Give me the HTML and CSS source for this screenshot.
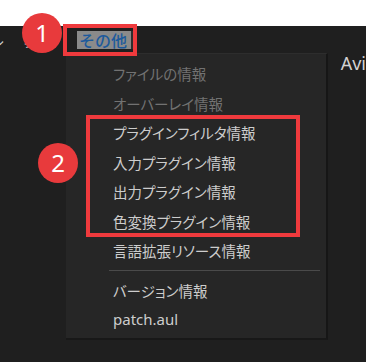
FILE: index.html
```html
<!DOCTYPE html>
<html lang="ja">
<head>
<meta charset="utf-8">
<link rel="stylesheet" href="styles.css">
</head>
<body>
<div class="top"></div>
<div class="app">
  <div class="menubar">
    <span class="mb-item cut">ル</span>
    <span class="mb-item hidden">表示</span>
    <span class="mb-item active"><span class="hl">その他</span><span class="caret"></span></span>
  </div>
  <div class="workspace">
    <div class="left"></div>
    <div class="right"><span class="avi">Avi</span></div>
  </div>

  <div class="dropdown">
    <div class="item disabled">ファイルの情報</div>
    <div class="item disabled">オーバーレイ情報</div>
    <div class="item">プラグインフィルタ情報</div>
    <div class="item">入力プラグイン情報</div>
    <div class="item">出力プラグイン情報</div>
    <div class="item">色変換プラグイン情報</div>
    <div class="item">言語拡張リソース情報</div>
    <div class="sep"></div>
    <div class="item">バージョン情報</div>
    <div class="item latin">patch.aul</div>
  </div>

  <div class="mark box1"></div>
  <div class="mark box2"></div>
  <div class="badge b1">1</div>
  <div class="badge b2">2</div>
</div>
</body>
</html>
```

FILE: styles.css
```css
html, body {
  margin: 0;
  padding: 0;
}
body {
  width: 366px;
  height: 362px;
  overflow: hidden;
  background: #1f1f1f;
  font-family: "Noto Sans CJK JP", sans-serif;
}
.top {
  height: 26px;
  background: #ffffff;
}
.app {
  position: relative;
  height: 336px;
  background: #1f1f1f;
  display: flex;
  flex-direction: column;
}
.menubar {
  height: 27px;
  display: flex;
  align-items: center;
  margin-left: -11px;
  color: #cfcfcf;
  font-size: 15px;
}
.mb-item {
  line-height: 18px;
}
.mb-item.hidden {
  margin-left: 20px;
  font-size: 14px;
}
.mb-item.active {
  display: flex;
  margin-left: 25px;
}
.hl {
  background: #8a8a8a;
  color: #1d5a9c;
  font-size: 16px;
  line-height: 18px;
  padding: 0 4px 0 2px;
  font-weight: 500;
}
.caret {
  width: 4px;
  background: #2e2e2e;
}
.workspace {
  flex: 1;
  display: flex;
}
.left {
  width: 330px;
}
.right {
  flex: 1;
  padding: 0 0 0 13px;
}
.avi {
  display: block;
  margin-top: -2px;
  font-family: "Noto Sans", sans-serif;
  font-size: 18px;
  color: #d2d2d2;
  line-height: 24px;
}
.dropdown {
  position: absolute;
  left: 66px;
  top: 27px;
  width: 260px;
  padding: 5px 0 3px;
  background: #262626;
  border-top: 1px solid #2d2d2d;
  border-right: 2px solid #161616;
  border-bottom: 2px solid #181818;
  font-size: 14.5px;
  font-feature-settings: "palt";
}
.item {
  height: 29.5px;
  line-height: 29.5px;
  padding-left: 47px;
  color: #cdcdcd;
  white-space: nowrap;
}
.item.disabled {
  color: #727272;
}
.item.latin {
  font-family: "Noto Sans", sans-serif;
  font-size: 15px;
}
.sep {
  height: 1px;
  margin: 4px 6px 5px 43px;
  background: #4a4a4a;
}
.mark {
  position: absolute;
  border: 4px solid #ef3a3d;
  box-sizing: border-box;
}
.box1 {
  left: 63px;
  top: -2px;
  width: 74px;
  height: 32px;
}
.box2 {
  left: 86px;
  top: 89px;
  width: 214px;
  height: 122px;
}
.badge {
  position: absolute;
  width: 40px;
  height: 40px;
  border-radius: 50%;
  background: #e83a3c;
  color: #ffffff;
  font-family: "Noto Sans", sans-serif;
  font-size: 24px;
  line-height: 40px;
  text-align: center;
}
.b1 {
  left: 22px;
  top: -13px;
}
.b2 {
  left: 38px;
  top: 117px;
}
```
